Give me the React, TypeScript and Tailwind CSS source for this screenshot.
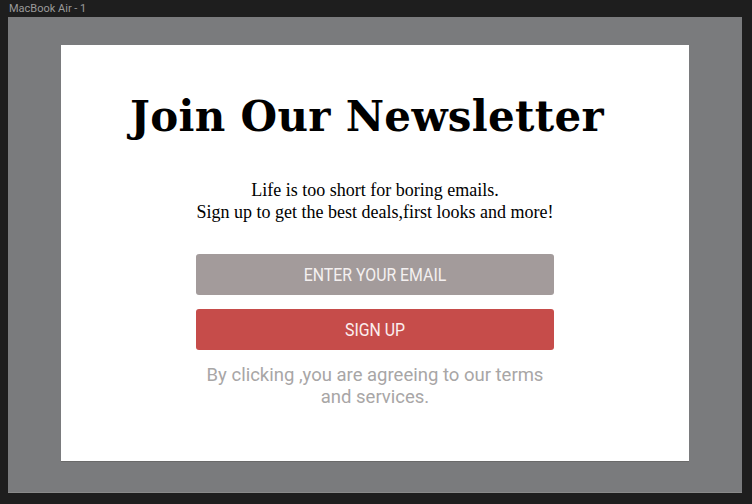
export default function App() {
  return (
    <div className="w-[752px] h-[504px] bg-[#1e1e1e] flex flex-col px-2">
      {/* artboard label */}
      <div className="h-[17px] pt-[3px] pl-px text-[11px] leading-[12px] text-[#9a9a9a] font-['Roboto',sans-serif]">
        MacBook Air - 1
      </div>

      <div className="w-[734px] h-[476px] bg-[#7a7b7d] border-b border-[#8a8a8a] pt-[28px] pl-[53px]">
        <div className="w-[628px] h-[416px] bg-white flex flex-col items-center shadow-[0_1px_0_#6a6a6a]">
          <h1 className="mt-[48px] mr-[16px] text-[42px] leading-[48px] tracking-[0.3px] font-bold text-black font-['DejaVu_Serif',serif]">
            Join Our Newsletter
          </h1>

          <p className="mt-[38px] text-center text-[18px] leading-[22px] text-black font-['Liberation_Serif',serif]">
            Life is too short for boring emails.
            <br />
            Sign up to get the best deals,first looks and more!
          </p>

          <div className="mt-[31px] w-[358px] flex flex-col gap-[14px]">
            <div className="h-[41px] rounded-[3px] bg-[#a39b9b] flex items-center justify-center text-[18px] text-[#f4f0f0] font-['Roboto',sans-serif]">
              <span className="inline-block scale-x-[0.88]">ENTER YOUR EMAIL</span>
            </div>
            <button className="h-[41px] rounded-[3px] bg-[#c64c4a] flex items-center justify-center text-[18px] text-[#fbeeee] font-['Roboto',sans-serif]">
              <span className="inline-block scale-x-[0.88]">SIGN UP</span>
            </button>
          </div>

          <p className="mt-[14px] w-[370px] text-center text-[18.5px] leading-[22px] text-[#a8a6a6] font-['Roboto',sans-serif]">
            By clicking ,you are agreeing to our terms and services.
          </p>
        </div>
      </div>
    </div>
  )
}
